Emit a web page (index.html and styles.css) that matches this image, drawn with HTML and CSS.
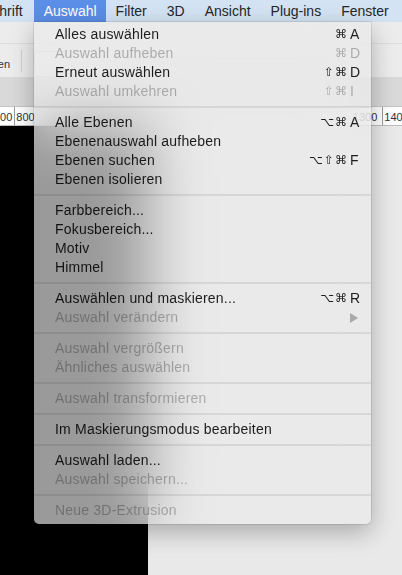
FILE: index.html
```html
<!DOCTYPE html>
<html lang="de">
<head>
    <meta charset="UTF-8">
    <meta name="viewport" content="width=device-width, initial-scale=1.0">
    <title>Auswahl</title>
    <link rel="stylesheet" href="styles.css">
</head>
<body>
    <header class="menubar">
        <span class="menubar-item first">Schrift</span>
        <span class="menubar-item active">Auswahl</span>
        <span class="menubar-item">Filter</span>
        <span class="menubar-item">3D</span>
        <span class="menubar-item">Ansicht</span>
        <span class="menubar-item">Plug-ins</span>
        <span class="menubar-item">Fenster</span>
    </header>

    <div class="titlebar"></div>
    <div class="toolbar">
        <span class="toolbar-label">Vorgaben</span>
        <span class="toolbar-divider"></span>
        <span class="toolbar-button"></span>
    </div>
    <div class="tabbar"></div>

    <div class="ruler">
        <span class="ruler-seg first">700</span>
        <span class="ruler-seg">800</span>
        <span class="ruler-seg"></span>
        <span class="ruler-seg"></span>
        <span class="ruler-seg"></span>
        <span class="ruler-seg"></span>
        <span class="ruler-seg end">1300</span>
        <span class="ruler-seg">1400</span>
    </div>

    <div class="workspace">
        <div class="canvas"></div>
        <div class="pasteboard"></div>
    </div>

    <!-- geöffnetes Menü "Auswahl" -->
    <div class="menu">
        <div class="menu-item">Alles auswählen<span class="shortcut"><span class="mods">⌘</span><span class="key">A</span></span></div>
        <div class="menu-item disabled">Auswahl aufheben<span class="shortcut"><span class="mods">⌘</span><span class="key">D</span></span></div>
        <div class="menu-item">Erneut auswählen<span class="shortcut"><span class="mods">⇧⌘</span><span class="key">D</span></span></div>
        <div class="menu-item disabled">Auswahl umkehren<span class="shortcut"><span class="mods">⇧⌘</span><span class="key">I</span></span></div>
        <div class="separator"></div>
        <div class="menu-item">Alle Ebenen<span class="shortcut"><span class="mods">⌥⌘</span><span class="key">A</span></span></div>
        <div class="menu-item">Ebenenauswahl aufheben</div>
        <div class="menu-item">Ebenen suchen<span class="shortcut"><span class="mods">⌥⇧⌘</span><span class="key">F</span></span></div>
        <div class="menu-item">Ebenen isolieren</div>
        <div class="separator"></div>
        <div class="menu-item">Farbbereich...</div>
        <div class="menu-item">Fokusbereich...</div>
        <div class="menu-item">Motiv</div>
        <div class="menu-item">Himmel</div>
        <div class="separator"></div>
        <div class="menu-item">Auswählen und maskieren...<span class="shortcut"><span class="mods">⌥⌘</span><span class="key">R</span></span></div>
        <div class="menu-item disabled">Auswahl verändern<span class="shortcut"><span class="key"><span class="submenu-arrow"></span></span></span></div>
        <div class="separator"></div>
        <div class="menu-item disabled">Auswahl vergrößern</div>
        <div class="menu-item disabled">Ähnliches auswählen</div>
        <div class="separator"></div>
        <div class="menu-item disabled">Auswahl transformieren</div>
        <div class="separator"></div>
        <div class="menu-item">Im Maskierungsmodus bearbeiten</div>
        <div class="separator"></div>
        <div class="menu-item">Auswahl laden...</div>
        <div class="menu-item disabled">Auswahl speichern...</div>
        <div class="separator"></div>
        <div class="menu-item disabled">Neue 3D-Extrusion</div>
    </div>
</body>
</html>
```

FILE: styles.css
```css
body {
    margin: 0;
    padding: 0;
    height: 100vh;
    overflow: hidden;
    font-family: 'Liberation Sans', 'DejaVu Sans', sans-serif;
    background: #e9e9e9;
    display: flex;
    flex-direction: column;
}

/* Menüleiste oben */
.menubar {
    height: 22px;
    flex: none;
    display: flex;
    align-items: stretch;
    background: #d3e3f3;
    color: #262626;
    font-size: 14px;
    white-space: nowrap;
}

.menubar-item {
    padding: 0 10px;
    line-height: 22px;
}

.menubar-item.first {
    margin-left: -17px;
    padding-left: 0;
    padding-right: 11px;
}

.menubar-item.active {
    background: #5b8ee6;
    color: #ffffff;
    padding-right: 9px;
}

/* Werkzeugleisten */
.titlebar {
    height: 21px;
    flex: none;
    background: #ececec;
    border-bottom: 1px solid #dedede;
}

.toolbar {
    height: 33px;
    flex: none;
    display: flex;
    align-items: center;
    background: #ececec;
    overflow: hidden;
}

.toolbar-label {
    font-size: 11px;
    color: #333333;
    margin-left: -37px;
    margin-top: 6px;
    white-space: nowrap;
}

.toolbar-divider {
    width: 1px;
    height: 22px;
    background: #cfcfcf;
    margin-left: 11px;
}

.toolbar-button {
    width: 80px;
    height: 24px;
    margin-left: 12px;
    margin-top: 6px;
    border: 1px solid #c8c8c8;
    border-radius: 4px;
    background: #f4f4f4;
}

.tabbar {
    height: 30px;
    flex: none;
    background: #d9d9d9;
    border-bottom: 1px solid #c4c4c4;
    box-sizing: border-box;
}

/* Lineal */
.ruler {
    height: 19px;
    flex: none;
    display: flex;
    background: #ffffff;
    border-bottom: 1px solid #bdbdbd;
    box-sizing: border-box;
    overflow: hidden;
    font-size: 11px;
    color: #333333;
    white-space: nowrap;
}

.ruler-seg {
    flex: none;
    width: 61.33px;
    border-left: 1px solid #9a9a9a;
    box-sizing: border-box;
    padding-left: 1px;
    line-height: 21px;
}

.ruler-seg.first {
    margin-left: -47px;
    text-align: right;
    padding-right: 2px;
}

.ruler-seg.end {
    text-align: right;
    padding-right: 5px;
}

/* Arbeitsfläche */
.workspace {
    flex: 1;
    display: flex;
}

.canvas {
    width: 148px;
    background: #000000;
}

.pasteboard {
    flex: 1;
    background: #e9e9e9;
}

/* Menü */
.menu {
    position: absolute;
    top: 22px;
    left: 34px;
    width: 337px;
    padding: 3px 0 4px;
    background: rgba(233, 233, 234, 0.66);
    backdrop-filter: blur(30px);
    -webkit-backdrop-filter: blur(30px);
    border-radius: 0 0 5px 5px;
    box-shadow: 0 0 0 0.5px rgba(0, 0, 0, 0.18), 0 8px 24px rgba(0, 0, 0, 0.28);
    font-size: 14px;
    letter-spacing: 0.2px;
    color: rgba(0, 0, 0, 0.88);
}

.menu-item {
    display: flex;
    justify-content: space-between;
    align-items: center;
    height: 19px;
    line-height: 19px;
    padding: 0 10px 0 21px;
    white-space: nowrap;
}

.menu-item.disabled {
    color: rgba(0, 0, 0, 0.28);
}

.shortcut {
    display: flex;
    align-items: center;
    font-family: 'DejaVu Sans', 'Liberation Sans', sans-serif;
}

.mods {
    font-size: 12px;
    letter-spacing: 1px;
}

.key {
    width: 11px;
    margin-left: 2px;
    font-family: 'Liberation Sans', sans-serif;
    display: flex;
    align-items: center;
}

.submenu-arrow {
    width: 0;
    height: 0;
    border-top: 5px solid transparent;
    border-bottom: 5px solid transparent;
    border-left: 8px solid rgba(0, 0, 0, 0.28);
}

.separator {
    height: 2px;
    margin: 5px 0;
    background: rgba(0, 0, 0, 0.08);
}
```
